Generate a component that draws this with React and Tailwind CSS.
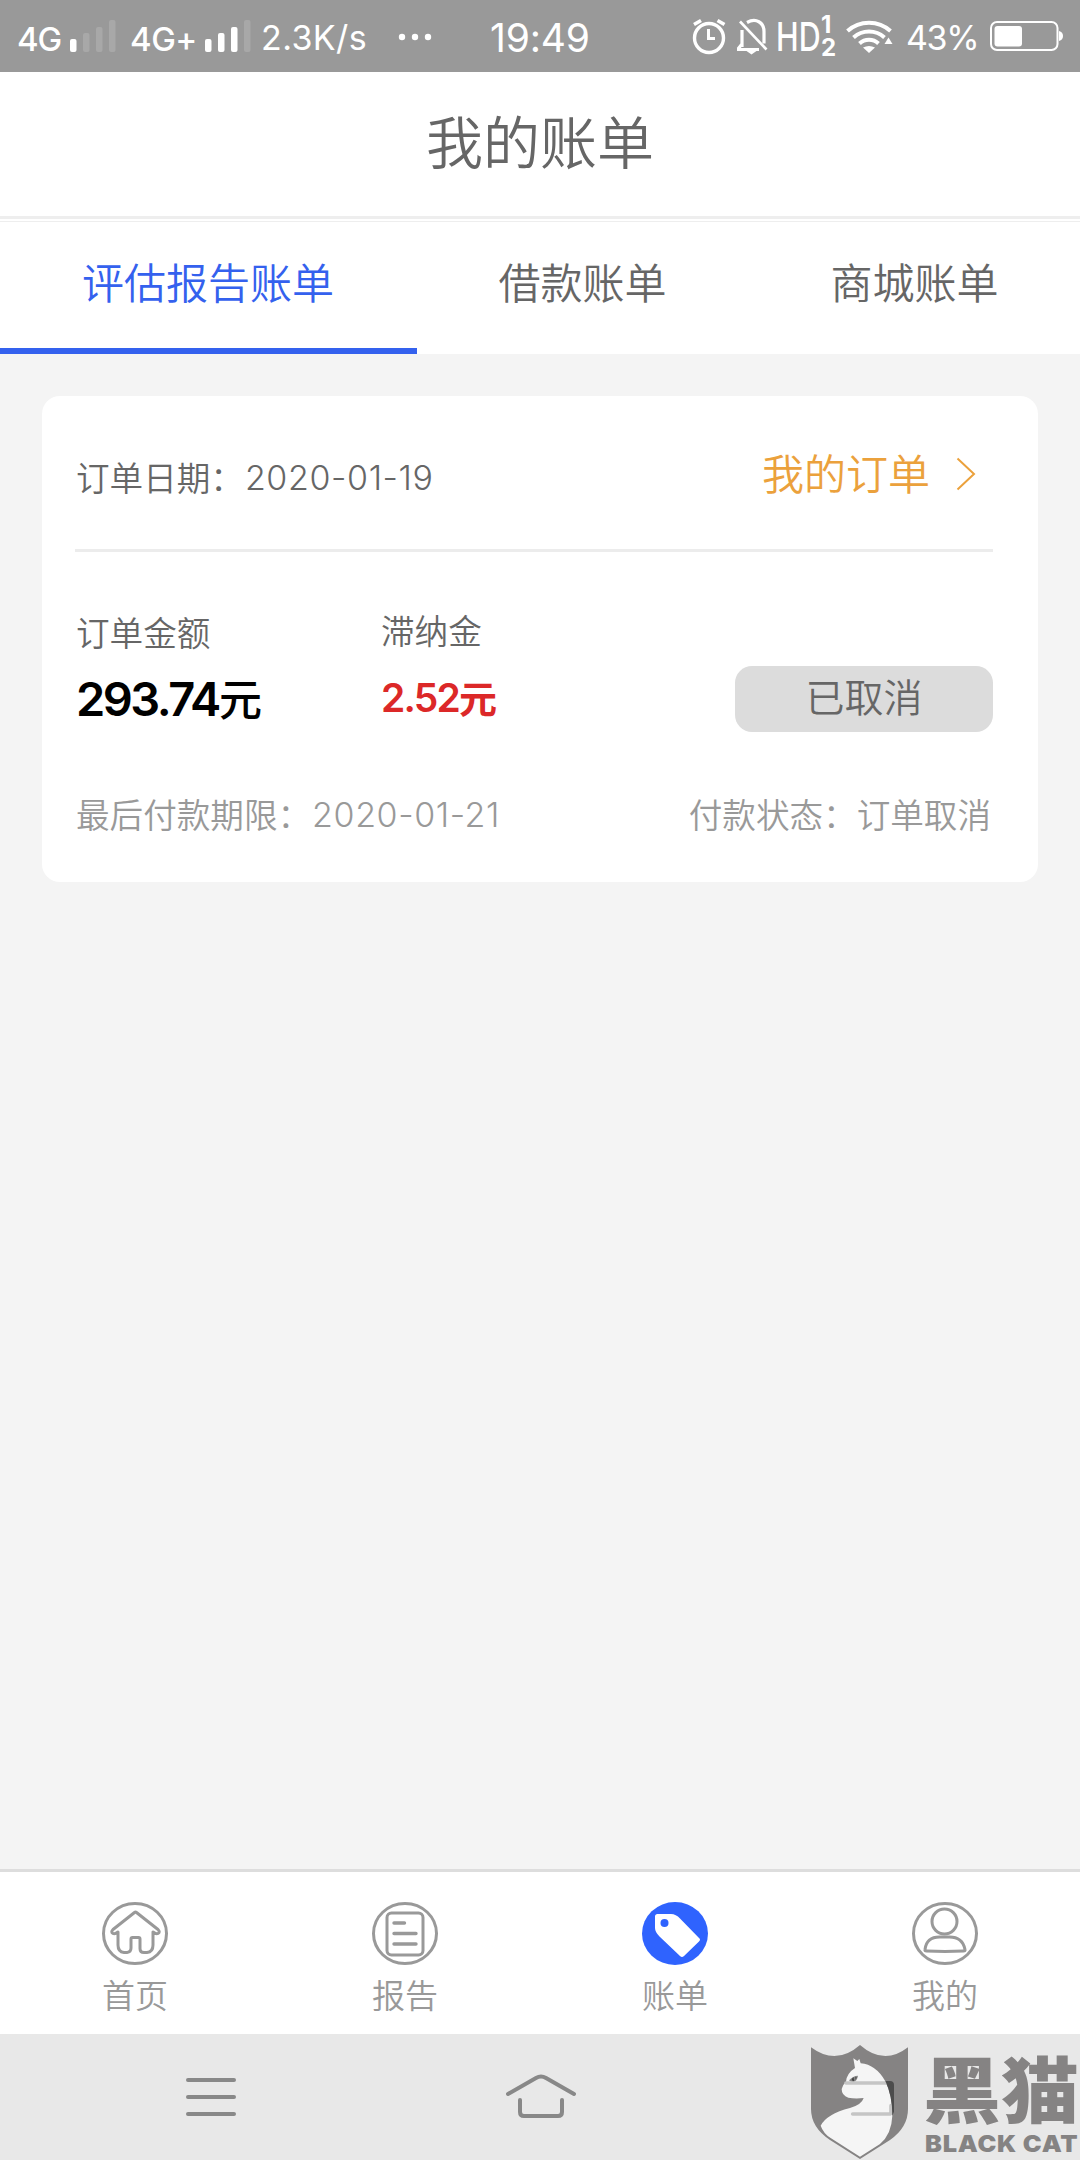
const tabs = [
  { name: "评估报告账单", width: "w-[417px]", active: true },
  { name: "借款账单", width: "w-[331px]" },
  { name: "商城账单", width: "w-[333px]" },
];

const Signal = ({ level }) => (
  <svg className="mt-[19px] h-[34px] w-[46px] shrink-0" viewBox="0 0 46 34" fill="#fff">
    <rect x="0" y="20" width="6.5" height="13" rx="2" />
    <rect x="13" y="14" width="6.5" height="19" rx="2" opacity={level > 1 ? 1 : 0.15} />
    <rect x="26" y="8" width="6.5" height="25" rx="2" opacity={level > 2 ? 1 : 0.15} />
    <rect x="39" y="1" width="6.5" height="32" rx="2" opacity="0.15" />
  </svg>
);

const StatusBar = () => (
  <div className="flex h-[72px] shrink-0 items-start bg-[#999999] pl-[17px] font-['Inter'] font-normal whitespace-nowrap text-white">
    <span className="w-[53px] pt-[19px] text-[33px] leading-[40px] font-medium tracking-[-1.2px]">4G</span>
    <Signal level={1} />
    <span className="ml-[14px] w-[75px] pt-[19px] text-[33px] leading-[40px] font-medium tracking-[-0.5px]">4G+</span>
    <Signal level={3} />
    <span className="ml-[10px] w-[137px] pt-[18px] text-[34px] leading-[40px] tracking-[0.4px]">2.3K/s</span>
    <svg className="mt-[33px] h-[8px] w-[34px]" viewBox="0 0 34 8" fill="#fff">
      <circle cx="4" cy="4" r="3.2" />
      <circle cx="17" cy="4" r="3.2" />
      <circle cx="30" cy="4" r="3.2" />
    </svg>
    <span className="ml-[58px] w-[201px] pt-[14px] text-[39px] leading-[48px] tracking-[-0.2px]">19:49</span>

    {/* Alarm clock */}
    <svg className="mt-[18px] h-[38px] w-[36px]" viewBox="691 18 36 38" fill="none" stroke="#fff">
      <circle cx="709" cy="38" r="14.5" strokeWidth="3.4" />
      <path d="M708.5 29v9.5h6.5" strokeWidth="3" />
      <path d="M694 24.500l7-4M724.500 24.500l-7-4" strokeWidth="3.6" />
    </svg>

    {/* Muted bell */}
    <svg className="mt-[18px] ml-[9px] h-[38px] w-[32px]" viewBox="736 18 32 38" fill="none" stroke="#fff">
      <path d="M742 47V30M737 49.500h22M738 49l4-5M747 22.500c9-5 17 0 17 9v12" strokeWidth="3.2" />
      <path d="M740 21.500l26.500 28" strokeWidth="2.6" />
      <path d="M746.500 51h10l-5 3.500z" fill="#fff" stroke="none" />
    </svg>

    <div className="ml-[8px] w-[45px] pt-[13px]">
      <span className="block w-[45px] origin-left scale-x-[0.76] text-[40px] leading-[48px] font-medium">HD</span>
    </div>
    <span className="flex w-[16px] flex-col pt-[13px] text-[24px] leading-[23px] font-bold">
      <span>1</span>
      <span>2</span>
    </span>

    {/* Wifi */}
    <svg className="mt-[18px] ml-[8px] h-[38px] w-[48px]" viewBox="845 18 48 38" fill="none" stroke="#fff">
      <path d="M847.500 31a32 32 0 0 1 43 0M853.500 37.500a23 23 0 0 1 31 0M859.500 43.500a14 14 0 0 1 19 0" strokeWidth="4" />
      <path d="M863 47.500q6-3 12 0l-6 5.500z" fill="#fff" stroke="none" />
      <path d="M884.500 44h8l-4-6.500z" fill="#fff" stroke="none" />
    </svg>
    <span className="ml-[13px] w-[84px] pt-[18px] text-[34px] leading-[40px] tracking-[-1.4px]">43%</span>

    {/* Battery */}
    <svg className="mt-[20px] h-[32px] w-[74px]" viewBox="990 20 74 32" fill="none" stroke="#fff">
      <rect x="991" y="22" width="66.5" height="28" rx="6" strokeWidth="2" />
      <rect x="994.5" y="26" width="27.5" height="20.5" rx="3" fill="#fff" stroke="none" />
      <path d="M1059 31q4 1 4 5t-4 5z" fill="#fff" stroke="none" />
    </svg>
  </div>
);

const BillCard = () => (
  <div className="mx-[42px] mt-[42px] h-[486px] rounded-[18px] bg-white pr-[45px] pl-[33px]">
    {/* Order date */}
    <div className="flex h-[156px] items-center justify-between border-b-3 border-[#ececec] pt-[4px]">
      <div className="flex items-center pt-[4px] pl-px text-[33.6px] leading-[48px] text-[#666]">
        <span>订单日期：</span>
        <span className="ml-px pt-[3px] font-['Inter'] text-[34px] tracking-[0.6px]">2020-01-19</span>
      </div>
      <div className="mr-[17px] flex items-center pb-[6px] text-[42px] leading-[60px] text-[#eba13c]">
        我的订单
        <svg className="mt-[4px] ml-[26px] h-[34px] w-[20px]" viewBox="0 0 20 34" fill="none" stroke="#eba13c" strokeWidth="2">
          <path d="M1.5 1.500L18 17 1.500 32.500" />
        </svg>
      </div>
    </div>

    {/* Amounts */}
    <div className="flex h-[206px] pl-px text-[33.6px] text-[#666]">
      <div className="w-[305px] pt-[56px]">
        <p className="leading-[48px]">订单金额</p>
        <p className="mt-[12px] flex items-center text-[43px] leading-[60px] font-medium text-black">
          <span className="pt-px font-['Inter'] text-[47px] font-semibold tracking-[-2.5px]">293.74</span>
          <span className="-mt-[4px]">元</span>
        </p>
      </div>
      <div className="w-[354px] pt-[54px]">
        <p className="leading-[48px]">滞纳金</p>
        <p className="mt-[14px] flex items-center text-[38px] leading-[60px] font-medium text-[#dc2828]">
          <span className="font-['Inter'] text-[39px] font-semibold tracking-[-1.8px]">2.52</span>
          <span className="-mt-[3px] font-bold">元</span>
        </p>
      </div>
      <div className="pt-[114px]">
        <button className="block h-[66px] w-[258px] rounded-[17px] bg-[#dcdcdc] pb-[8px] text-[39px] leading-[56px]">已取消</button>
      </div>
    </div>

    {/* Payment deadline */}
    <div className="flex items-center justify-between pt-[30px] pr-[2px] pl-px text-[33.6px] leading-[48px] text-[#999]">
      <div className="flex items-center">
        <span>最后付款期限：</span>
        <span className="ml-px pt-[3px] font-['Inter'] text-[34px] tracking-[0.6px]">2020-01-21</span>
      </div>
      <span>付款状态：订单取消</span>
    </div>
  </div>
);

const icons = {
  home: (
    <path d="M32.500 10.500q1-.8 2 0L56 27.500q2.500 2.500 0 4-2 1-5-1.500V43q0 7-6 7.500h-3q-4 0-4-4V37q0-1.500-1.500-1.500h-6Q29 35.500 29 37v9q0 4-4 4.500h-3q-6-.5-6-7.500V30q-3 2.500-5 1.500-2.500-1.500 0-4z" />
  ),
  report: (
    <>
      <rect x="15" y="11" width="36" height="42" rx="4.5" strokeWidth="3" />
      <path d="M22 21h10.500M22 31.500h22M22 42h22" strokeWidth="3.4" />
    </>
  ),
  mine: (
    <>
      <circle cx="32.5" cy="19.500" r="12.5" />
      <path d="M13 47.500q1.500-12.500 14.500-12.500h10q13 0 15.500 12.500.5 1.500-1.500 1.500-18.500.8-37 0-2 0-1.500-1.500z" />
    </>
  ),
};

const NavItem = ({ name, icon }) => (
  <div className="flex flex-1 flex-col items-center pt-[30px] text-[33px] leading-[48px] text-[#999]">
    {icon === "bill" ? (
      <svg className="h-[63px] w-[66px]" viewBox="0 0 66 63">
        <ellipse cx="33" cy="31.500" rx="33" ry="31.500" fill="#2f63fe" />
        <path d="M15.500 12H29q5 0 9 4.500L57 36q2 1.500 0 3.500L42 54q-2 2-4 0L17.500 34.500Q13 30 13 26V14.500q0-2.500 2.500-2.500z" fill="#fff" />
        <circle cx="22.5" cy="21" r="4" fill="#2f63fe" />
      </svg>
    ) : (
      <svg className="h-[63px] w-[66px]" viewBox="0 0 66 63" fill="none" stroke="#999" strokeWidth="3" strokeLinecap="round" strokeLinejoin="round">
        <ellipse cx="33" cy="31.500" rx="31.500" ry="30" />
        {icons[icon]}
      </svg>
    )}
    <span className="mt-[5px]">{name}</span>
  </div>
);

// Brand mark lying over the system bar
const BlackCatMark = () => (
  <div className="absolute top-0 right-0 flex h-[126px] w-[280px] text-[#858383]">
    <svg className="h-[126px] w-[125px] shrink-0" viewBox="0 0 375 378">
      <path d="M33 40Q108 96 180 33 252 96 324 40V225Q324 280 270 318L180 375 90 318Q33 280 33 225z" fill="#858383" />
      <path d="M160 73l12 8 6-6 4 13Q228 92 256 142 277 185 277 245 275 300 240 330L180 368 92 312Q70 298 62 275 80 240 150 222 185 212 191 192 165 195 145 191 125 185 125 165 128 152 138 143 140 118 165 102z" fill="#f5f5f5" />
      <path d="M147 139q12-14 27-14-2 15-15 20-8-1-12-6z" fill="#888" />
      <path d="M155 136l5-7 3 10-3 5zM166 128l4 2-3 8z" fill="#444" />
      <path d="M138 147h125M158 240h108q7 0 7-7v-18" fill="none" stroke="#c5c5c5" strokeWidth="11" strokeLinecap="round" />
      <path d="M256 141h14q12 0 12 12v80l-5 12q0-62-21-104z" fill="#4c4c4c" />
    </svg>
    <div className="w-[155px] shrink-0">
      <p className="mt-[14px] -ml-[2px] origin-center scale-y-[0.92] font-['Noto_Sans_CJK_SC'] text-[78px] leading-[76px] font-black whitespace-nowrap">黑猫</p>
      <p className="mt-[6px] w-[139px] origin-left scale-x-[1.1] font-['Inter'] text-[23px] leading-[28px] font-black tracking-[0.7px] whitespace-nowrap">BLACK CAT</p>
    </div>
  </div>
);

export default function App() {
  return (
    <div className="flex h-[2160px] w-[1080px] flex-col overflow-hidden bg-[#f4f4f4] font-['Noto_Sans_CJK_SC',sans-serif] font-[350]">
      <StatusBar />

      <h1 className="h-[147px] shrink-0 border-b-3 border-[#eeeeee] bg-white text-center text-[57px] leading-[135px] text-[#666]">
        我的账单
      </h1>

      <div className="flex h-[135px] shrink-0 bg-white pt-[2px]">
        {tabs.map((tab) => (
          <div
            key={tab.name}
            className={`${tab.width} shrink-0 border-t border-t-[#eeeeee] text-center text-[42px] leading-[117px] ${
              tab.active ? "border-b-6 border-b-[#3461ee] pr-px text-[#3461ee]" : "text-[#666]"
            }`}
          >
            {tab.name}
          </div>
        ))}
      </div>

      <main className="flex-1">
        <BillCard />
      </main>

      <nav className="flex h-[165px] shrink-0 border-t-3 border-[#dddddd] bg-white">
        <NavItem name="首页" icon="home" />
        <NavItem name="报告" icon="report" />
        <NavItem name="账单" icon="bill" />
        <NavItem name="我的" icon="mine" />
      </nav>

      {/* System navigation */}
      <div className="relative flex h-[126px] shrink-0 items-start bg-[#e8e8e8] pt-[40px] pl-[186px]">
        <svg className="h-[46px] w-[50px]" viewBox="0 0 50 46" stroke="#888" strokeWidth="4" strokeLinecap="round">
          <path d="M2 6h46M2 23h46M2 40h46" />
        </svg>
        <svg className="ml-[269px] h-[46px] w-[72px]" viewBox="0 0 72 46" fill="none" stroke="#888" strokeWidth="4" strokeLinecap="round" strokeLinejoin="round">
          <path d="M3 20L31 4q5-3 10 0l28 16M15 26v12q0 4 4 4h34q4 0 4-4V26" />
        </svg>
        <BlackCatMark />
      </div>
    </div>
  );
}
